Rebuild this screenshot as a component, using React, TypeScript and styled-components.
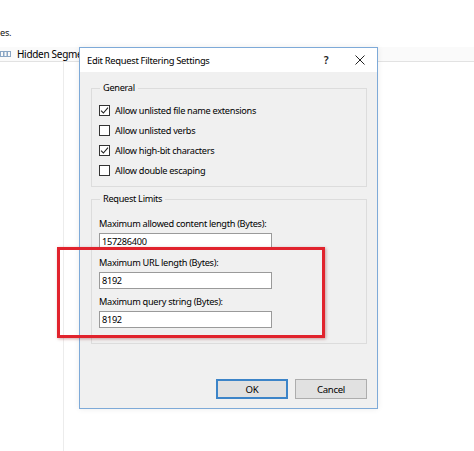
import React from 'react';
import styled, { createGlobalStyle } from 'styled-components';

const GlobalStyle = createGlobalStyle`
  html, body {
    margin: 0;
    padding: 0;
    background: #ffffff;
  }
  body {
    font-family: 'Noto Sans', 'Open Sans', sans-serif;
    color: #000;
  }
`;

const Screen = styled.div`
  position: relative;
  width: 474px;
  height: 451px;
  overflow: hidden;
  background: #ffffff;
  font-size: 9.2px;
  letter-spacing: -0.3px;
`;

const TopText = styled.div`
  height: 47px;
  padding-top: 26px;
  box-sizing: border-box;
  line-height: 14px;
  color: #111;
`;

const Toolbar = styled.div`
  display: flex;
  align-items: center;
  gap: 6px;
  height: 15px;
  box-sizing: border-box;
  border-bottom: 1px solid #e2e2e2;
  background: #fafafa;
  font-size: 10px;
  white-space: nowrap;
`;

const ToolbarLabel = styled.span`
  width: 63px;
  overflow: hidden;
`;

const Workspace = styled.div`
  display: flex;
  height: 400px;
`;

const LeftPane = styled.div`
  width: 63px;
  border-right: 1px solid #ececec;
`;

const Dialog = styled.div`
  position: absolute;
  left: 79px;
  top: 47px;
  width: 299px;
  height: 362px;
  box-sizing: border-box;
  border: 1px solid #7eaad8;
  background: #f0f0f0;
  display: flex;
  flex-direction: column;
  box-shadow: 0 0 6px rgba(0, 0, 0, 0.08);
`;

const TitleBar = styled.div`
  height: 24px;
  flex: none;
  background: #ffffff;
  display: flex;
  align-items: center;
  padding-left: 7px;
  font-size: 9.4px;
`;

const Title = styled.span`
  flex: 1;
`;

const TitleButton = styled.span`
  width: 34px;
  display: flex;
  justify-content: center;
  align-items: center;
  font-size: 10.5px;
  font-weight: 600;
  color: #222;
`;

const Body = styled.div`
  flex: 1;
  display: flex;
  flex-direction: column;
  padding: 9px 10px 9px 11px;
`;

const GroupBox = styled.fieldset<{ $gapTop?: number; $padBottom: number }>`
  margin: ${(p) => p.$gapTop ?? 0}px 0 0 0;
  padding: 5px 7px ${(p) => p.$padBottom}px 7px;
  border: 1px solid #dcdcdc;
  min-width: 0;
`;

const Legend = styled.legend`
  padding: 0 3px;
  margin-left: 1px;
  line-height: 14px;
`;

const CheckRow = styled.div`
  display: flex;
  align-items: center;
  gap: 5px;
  height: 20px;
`;

const Box = styled.span`
  width: 11px;
  height: 11px;
  box-sizing: border-box;
  border: 1px solid #333;
  background: #fff;
  display: flex;
  align-items: center;
  justify-content: center;
`;

const FieldLabel = styled.div`
  line-height: 14px;
  margin-top: 6px;
  &:first-child {
    margin-top: 2px;
  }
`;

const TextBox = styled.div`
  margin-top: 2px;
  width: 173px;
  height: 17px;
  box-sizing: border-box;
  border: 1px solid #9a9a9a;
  background: #fff;
  padding-left: 2px;
  line-height: 15px;
`;

const Footer = styled.div`
  margin-top: auto;
  display: flex;
  justify-content: flex-end;
  gap: 7px;
`;

const Button = styled.div<{ $primary?: boolean }>`
  width: 72px;
  height: 20px;
  box-sizing: border-box;
  display: flex;
  align-items: center;
  justify-content: center;
  background: #e1e1e1;
  border: ${(p) => (p.$primary ? '2px solid #3c84c8' : '1px solid #adadad')};
  font-size: 9.6px;
`;

const Highlight = styled.div`
  position: absolute;
  left: 57px;
  top: 247px;
  width: 268px;
  height: 91px;
  box-sizing: border-box;
  border: 3px solid #e1232d;
  box-shadow: 1px 1px 3px rgba(120, 0, 0, 0.35);
`;

const SegIcon = () => (
  <svg width="11" height="6" viewBox="0 0 11 6">
    <rect x="0.5" y="0.5" width="3" height="5" fill="none" stroke="#8aa6c4" />
    <rect x="4" y="0.5" width="3" height="5" fill="none" stroke="#8aa6c4" />
    <rect x="7.5" y="0.5" width="3" height="5" fill="none" stroke="#8aa6c4" />
  </svg>
);

const Check = ({ checked }: { checked: boolean }) => (
  <Box>
    {checked && (
      <svg width="9" height="9" viewBox="0 0 9 9">
        <path d="M1 4.6 L3.4 7 L8 1.6" fill="none" stroke="#222" strokeWidth="1.1" />
      </svg>
    )}
  </Box>
);

const options = [
  { label: 'Allow unlisted file name extensions', checked: true },
  { label: 'Allow unlisted verbs', checked: false },
  { label: 'Allow high-bit characters', checked: true },
  { label: 'Allow double escaping', checked: false },
];

const limits = [
  { label: 'Maximum allowed content length (Bytes):', value: '157286400' },
  { label: 'Maximum URL length (Bytes):', value: '8192' },
  { label: 'Maximum query string (Bytes):', value: '8192' },
];

export default function App() {
  return (
    <>
      <GlobalStyle />
      <Screen>
        <TopText>es.</TopText>
        <Toolbar>
          <SegIcon />
          <ToolbarLabel>Hidden Segments</ToolbarLabel>
        </Toolbar>
        <Workspace>
          <LeftPane />
        </Workspace>

        <Dialog>
          <TitleBar>
            <Title>Edit Request Filtering Settings</Title>
            <TitleButton>?</TitleButton>
            <TitleButton>
              <svg width="10" height="10" viewBox="0 0 10 10">
                <path d="M0.5 0.5 L9.5 9.5 M9.5 0.5 L0.5 9.5" stroke="#222" strokeWidth="1" />
              </svg>
            </TitleButton>
          </TitleBar>
          <Body>
            <GroupBox $padBottom={6}>
              <Legend>General</Legend>
              {options.map((o) => (
                <CheckRow key={o.label}>
                  <Check checked={o.checked} />
                  <span>{o.label}</span>
                </CheckRow>
              ))}
            </GroupBox>
            <GroupBox $gapTop={5} $padBottom={15}>
              <Legend>Request Limits</Legend>
              {limits.map((l) => (
                <React.Fragment key={l.label}>
                  <FieldLabel>{l.label}</FieldLabel>
                  <TextBox>{l.value}</TextBox>
                </React.Fragment>
              ))}
            </GroupBox>
            <Footer>
              <Button $primary>OK</Button>
              <Button>Cancel</Button>
            </Footer>
          </Body>
        </Dialog>

        <Highlight />
      </Screen>
    </>
  );
}
